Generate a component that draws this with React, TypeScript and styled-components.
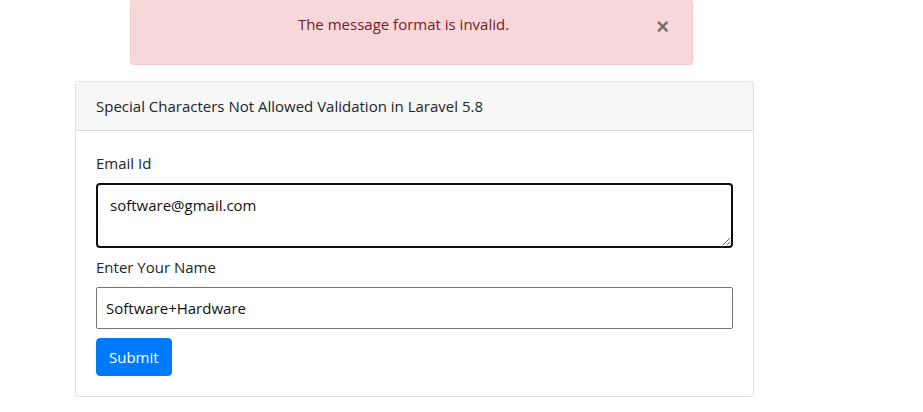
import React from "react";
import styled, { createGlobalStyle } from "styled-components";

const Global = createGlobalStyle`
  html, body { margin: 0; padding: 0; background: #fff; }
  body {
    font-family: "Open Sans", "Noto Sans", "Liberation Sans", sans-serif;
    font-size: 15px;
    line-height: 24px;
    color: #212529;
  }
  * { box-sizing: border-box; }
`;

const Page = styled.div`
  display: flex;
  flex-direction: column;
  align-items: flex-start;
  width: 923px;
`;

const Alert = styled.div`
  position: relative;
  margin: -1px 0 0 130px;
  width: 563px;
  padding: 12px 36px 12px 20px;
  background: #f8d7da;
  border: 1px solid #f5c6cb;
  border-radius: 4px;
  color: #721c24;
  text-align: center;
`;

const AlertText = styled.p`
  margin: 0 0 16px 0;
`;

const Close = styled.button`
  position: absolute;
  top: 12px;
  right: 23px;
  border: 0;
  background: transparent;
  padding: 0;
  font-family: "Liberation Sans", Arial, sans-serif;
  font-size: 22px;
  font-weight: 700;
  line-height: 30px;
  color: #000;
  opacity: 0.5;
  cursor: pointer;
`;

const Card = styled.div`
  margin: 16px 0 0 75px;
  width: 679px;
  border: 1px solid rgba(0, 0, 0, 0.125);
  border-radius: 4px;
  background: #fff;
  display: flex;
  flex-direction: column;
`;

const CardHeader = styled.div`
  padding: 12px 20px;
  background: #f7f7f7;
  border-bottom: 1px solid rgba(0, 0, 0, 0.125);
  border-radius: 3px 3px 0 0;
`;

const CardBody = styled.form`
  padding: 20px;
  display: flex;
  flex-direction: column;
  align-items: flex-start;
`;

const Group = styled.div<{ $gap: number }>`
  display: flex;
  flex-direction: column;
  width: 100%;
  margin-bottom: ${(p) => p.$gap}px;
`;

const Label = styled.label`
  display: block;
  margin-bottom: 8px;
`;

const TextArea = styled.textarea`
  display: block;
  width: 637px;
  height: 65px;
  padding: 8px 12px;
  border: 2px solid #101010;
  border-radius: 4px;
  outline: none;
  font: inherit;
  font-size: 15px;
  line-height: 24px;
  color: #111;
  resize: vertical;
`;

const Input = styled.input`
  display: block;
  width: 637px;
  height: 42px;
  padding: 6px 9px;
  border: 1px solid #767676;
  border-radius: 2px;
  font: inherit;
  font-size: 15px;
  color: #111;
  outline: none;
`;

const Button = styled.button`
  height: 38px;
  padding: 0 12px;
  border: 1px solid #007bff;
  border-radius: 4px;
  background: #007bff;
  color: #fff;
  font: inherit;
  font-size: 15px;
  cursor: pointer;
`;

export default function App() {
  return (
    <Page>
      <Global />
      <Alert role="alert">
        <AlertText>The message format is invalid.</AlertText>
        <Close type="button" aria-label="Close">×</Close>
      </Alert>
      <Card>
        <CardHeader>Special Characters Not Allowed Validation in Laravel 5.8</CardHeader>
        <CardBody onSubmit={(e) => e.preventDefault()}>
          <Group $gap={7}>
            <Label>Email Id</Label>
            <TextArea defaultValue="software@gmail.com" autoFocus />
          </Group>
          <Group $gap={9}>
            <Label>Enter Your Name</Label>
            <Input defaultValue="Software+Hardware" />
          </Group>
          <Button type="submit">Submit</Button>
        </CardBody>
      </Card>
    </Page>
  );
}
